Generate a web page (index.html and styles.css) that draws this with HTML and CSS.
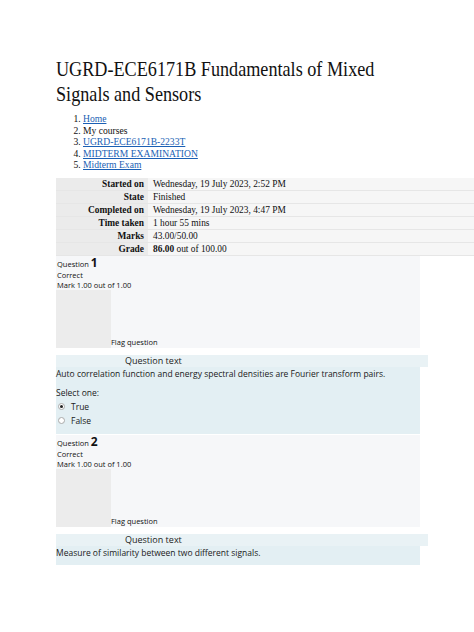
FILE: index.html
```html
<!DOCTYPE html>
<html>
<head>
<meta charset="utf-8">
<link rel="stylesheet" href="styles.css">
</head>
<body>
<div class="page">
  <h1 class="title"><span class="title-text">UGRD-ECE6171B Fundamentals of Mixed Signals and Sensors</span></h1>
  <ol class="crumbs">
    <li><a href="#">Home</a></li>
    <li>My courses</li>
    <li><a href="#">UGRD-ECE6171B-2233T</a></li>
    <li><a href="#">MIDTERM EXAMINATION</a></li>
    <li><a href="#">Midterm Exam</a></li>
  </ol>
  <table class="summary">
    <tr><th>Started on</th><td>Wednesday, 19 July 2023, 2:52 PM</td></tr>
    <tr><th>State</th><td>Finished</td></tr>
    <tr><th>Completed on</th><td>Wednesday, 19 July 2023, 4:47 PM</td></tr>
    <tr><th>Time taken</th><td>1 hour 55 mins</td></tr>
    <tr><th>Marks</th><td>43.00/50.00</td></tr>
    <tr><th>Grade</th><td><b>86.00</b> out of 100.00</td></tr>
  </table>

  <div class="que">
    <div class="que-meta">
      <div class="qno">Question <span class="num">1</span></div>
      <div>Correct</div>
      <div>Mark 1.00 out of 1.00</div>
    </div>
    <div class="flag-row">
      <div class="flag-box"></div>
      <div class="flag-text">Flag question</div>
    </div>
  </div>
  <div class="qtext-head">Question text</div>
  <div class="qtext-body">
    <p class="qtext">Auto correlation function and energy spectral densities are Fourier transform pairs.</p>
    <p class="prompt">Select one:</p>
    <div class="opt"><span class="radio checked"></span>True</div>
    <div class="opt"><span class="radio"></span>False</div>
  </div>

  <div class="que que2">
    <div class="que-meta">
      <div class="qno">Question <span class="num">2</span></div>
      <div>Correct</div>
      <div>Mark 1.00 out of 1.00</div>
    </div>
    <div class="flag-row">
      <div class="flag-box"></div>
      <div class="flag-text">Flag question</div>
    </div>
  </div>
  <div class="qtext-head">Question text</div>
  <div class="qtext-body short">
    <p class="qtext">Measure of similarity between two different signals.</p>
  </div>
</div>
</body>
</html>
```

FILE: styles.css
```css
html, body {
  margin: 0;
  padding: 0;
  background: #ffffff;
}
.page {
  padding: 57px 0 0 56px;
  font-family: "Liberation Serif", "Times New Roman", serif;
  color: #111;
}
.title {
  font-family: "Liberation Serif", serif;
  font-weight: normal;
  font-size: 21px;
  line-height: 25px;
  margin: 0 0 6px 0;
  color: #111;
  width: 390px;
  transform: scaleX(0.865);
  transform-origin: left top;
}
.crumbs {
  margin: 0 0 7px 0;
  padding-left: 27px;
  font-size: 9.6px;
  line-height: 11.5px;
}
.crumbs a {
  color: #1a5fb4;
  text-decoration: underline;
}
.summary {
  border-collapse: collapse;
  width: 418px;
  font-size: 9.4px;
  margin: 0;
}
.summary th, .summary td {
  height: 12px;
  padding: 0 4px;
  line-height: 12px;
  border-bottom: 1px solid #e6e6e6;
}
.summary th {
  text-align: right;
  width: 84px;
  background: #ebebeb;
  font-weight: bold;
}
.summary td {
  background: #f6f6f6;
  padding-left: 5px;
}
.que {
  width: 364px;
  background: #f6f7f9;
  font-family: "Open Sans", "Noto Sans", sans-serif;
  font-size: 7.5px;
  color: #111;
  margin-top: 0;
  padding-top: 1px;
}
.que-meta {
  line-height: 10px;
  padding-left: 1px;
}
.qno {
  line-height: 12px;
}
.qno .num {
  font-size: 12px;
  font-weight: bold;
}
.flag-row {
  display: flex;
  align-items: flex-end;
  margin-top: 0;
}
.flag-box {
  width: 55px;
  height: 58px;
  background: #ececec;
}
.flag-text {
  padding-bottom: 1px;
}
.qtext-head {
  width: 372px;
  margin-top: 7px;
  background: #e9f2f5;
  font-family: "Open Sans", "Noto Sans", sans-serif;
  font-size: 9px;
  line-height: 12px;
  padding-left: 69px;
  box-sizing: border-box;
  color: #222;
}
.qtext-body {
  width: 364px;
  background: #e3eff3;
  font-family: "Open Sans", "Noto Sans", sans-serif;
  font-size: 8.5px;
  color: #1a1a1a;
  padding: 1px 0 6px 0;
}
.qtext-body.short {
  padding-bottom: 6px;
}
.qtext-body.short .qtext {
  margin-bottom: 0;
}
.qtext {
  margin: 0 0 7px 0;
  line-height: 12px;
}
.prompt {
  margin: 0 0 1px 0;
  line-height: 12px;
}
.opt {
  display: flex;
  align-items: center;
  line-height: 14px;
}
.radio {
  width: 5px;
  height: 5px;
  border: 1px solid #aaa;
  border-radius: 50%;
  margin: 0 6px 0 2px;
  background: #fff;
  position: relative;
}
.radio.checked::after {
  content: "";
  position: absolute;
  left: 1px;
  top: 1px;
  width: 3px;
  height: 3px;
  border-radius: 50%;
  background: #222;
}
.que2 {
  margin-top: 1px;
}
```
